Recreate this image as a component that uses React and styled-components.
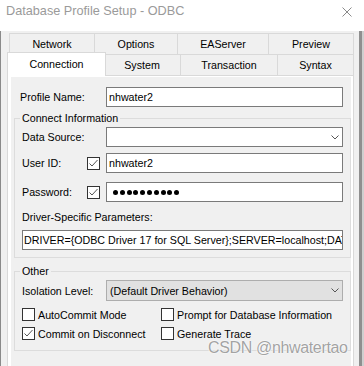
import React from "react";
import styled, { createGlobalStyle } from "styled-components";

const GlobalStyle = createGlobalStyle`
  html, body { margin: 0; padding: 0; background: #cfcfcf; }
  body { font-family: "Liberation Sans", Arial, sans-serif; }
  * { box-sizing: border-box; }
`;

const Screen = styled.div`
  position: relative;
  width: 364px;
  height: 366px;
  overflow: hidden;
  background: #cfcfcf;
  display: flex;
  flex-direction: column;
  font-family: "Liberation Sans", Arial, sans-serif;
  font-size: 10.7px;
  color: #000;
`;

const TitleBar = styled.div`
  flex: none;
  height: 31px;
  background: #fff;
  display: flex;
  align-items: flex-start;
  justify-content: space-between;
  padding: 0 12px 0 6px;
`;

const Title = styled.div`
  font-size: 12.7px;
  line-height: 22px;
  color: #9a9a9a;
`;

const CloseIcon = styled.svg`
  flex: none;
  margin-top: 7px;
`;

const Frame = styled.div`
  flex: 1;
  width: 362px;
  background: #f0f0f0;
  border-left: 1px solid #8a8a8a;
  border-right: 3px solid #8f8f8f;
  padding: 2px 0 0 6px;
  min-height: 0;
`;

const TabControl = styled.div`
  width: 347px;
  display: flex;
  flex-direction: column;
`;

const TabRow = styled.div`
  position: relative;
  z-index: 1;
  display: flex;
  align-items: flex-start;
  height: 21px;
  margin-left: 2px;
`;

const Tab = styled.div`
  flex: none;
  width: ${(p) => p.$w}px;
  height: 21px;
  margin-left: -1px;
  display: flex;
  align-items: center;
  justify-content: center;
  border: 1px solid #d9d9d9;
  border-bottom: none;
  background: #f0f0f0;
  &:first-child {
    margin-left: 0;
  }
  ${(p) =>
    p.$active &&
    `
    width: ${p.$w + 4}px;
    height: 24px;
    margin: -2px -2px 0 -2px;
    background: #fff;
    z-index: 2;
    padding-bottom: 1px;
    &:first-child { margin-left: -2px; }
  `}
`;

const Panel = styled.div`
  border: 1px solid #d9d9d9;
  background: #fff;
  padding: 1px 2px 0 3px;
  height: 320px;
`;

const Page = styled.div`
  height: 100%;
  background: #f0f0f0;
  padding: 0 0 0 3px;
  display: flex;
  flex-direction: column;
`;

const ProfileRow = styled.div`
  display: flex;
  align-items: center;
  margin-top: 10px;
  padding-left: 6px;
`;

const Label = styled.div`
  flex: none;
  width: ${(p) => p.$w}px;
  line-height: 14px;
  white-space: nowrap;
`;

const Field = styled.div`
  flex: none;
  width: ${(p) => p.$w}px;
  height: ${(p) => p.$h || 20}px;
  border: 1px solid #7a7a7a;
  background: #fff;
  padding: 0 3px 0 ${(p) => (p.$pad !== undefined ? p.$pad : 2)}px;
  display: flex;
  align-items: center;
  white-space: nowrap;
  overflow: hidden;
`;

const Combo = styled.div`
  flex: none;
  width: 237px;
  height: 21px;
  border: 1px solid #adadad;
  background: #e1e1e1;
  padding: 0 3px 0 3px;
  display: flex;
  align-items: center;
  white-space: nowrap;
`;

const Chevron = styled.svg`
  flex: none;
  margin-left: auto;
  margin-right: 0px;
`;

const Group = styled.div`
  width: 337px;
  margin-top: ${(p) => p.$mt}px;
  border: 1px solid #dcdcdc;
  padding: 0 7px ${(p) => p.$pb}px 7px;
  display: flex;
  flex-direction: column;
`;

const Caption = styled.div`
  align-self: flex-start;
  margin: -8px 0 0 -2px;
  padding: 0 2px;
  line-height: 14px;
  background: #f0f0f0;
`;

const Row = styled.div`
  display: flex;
  align-items: center;
  margin-top: ${(p) => p.$mt}px;
`;

const Box = styled.span`
  flex: none;
  width: 13px;
  height: 13px;
  border: 1px solid #333;
  background: #fff;
  margin-right: ${(p) => p.$mr}px;
  display: flex;
`;

const Dots = styled.div`
  display: flex;
  gap: 1.8px;
  margin-left: 4px;
`;

const Dot = styled.span`
  width: 5px;
  height: 5px;
  border-radius: 50%;
  background: #000;
`;

const LabelLine = styled.div`
  margin-top: ${(p) => p.$mt}px;
  line-height: 14px;
`;

const CheckGrid = styled.div`
  display: grid;
  grid-template-columns: 139px 1fr;
  row-gap: 6px;
  margin-top: 7px;
`;

const CheckItem = styled.div`
  display: flex;
  align-items: center;
  height: 13px;
  white-space: nowrap;
  line-height: 14px;
`;

const Watermark = styled.div`
  position: absolute;
  left: 208px;
  top: 339px;
  font-family: "Liberation Sans", Arial, sans-serif;
  font-size: 16px;
  line-height: 18px;
  letter-spacing: -0.35px;
  color: #a3a3a3;
  text-shadow: 0 0 1px #fff, 0 0 1px #fff, 0 0 2px #fff;
  white-space: nowrap;
`;

const Check = () => (
  <svg width="11" height="11" viewBox="0 0 11 11">
    <polyline points="1.5,5.5 4,8 9.5,2" fill="none" stroke="#555" strokeWidth="1" />
  </svg>
);

const Checkbox = ({ checked, mr }) => <Box $mr={mr}>{checked && <Check />}</Box>;

const ChevronDown = () => (
  <Chevron width="8" height="5" viewBox="0 0 8 5">
    <polyline points="0.5,0.5 4,4 7.5,0.5" fill="none" stroke="#555" strokeWidth="1" />
  </Chevron>
);

const row1 = [
  { t: "Network", w: 86 },
  { t: "Options", w: 84 },
  { t: "EAServer", w: 92 },
  { t: "Preview", w: 86 },
];
const row2 = [
  { t: "Connection", w: 95, active: true },
  { t: "System", w: 78 },
  { t: "Transaction", w: 98 },
  { t: "Syntax", w: 77 },
];

export default function App() {
  return (
    <>
      <GlobalStyle />
      <Screen>
        <TitleBar>
          <Title>Database Profile Setup - ODBC</Title>
          <CloseIcon width="10" height="10" viewBox="0 0 10 10">
            <path d="M0.5 0.5 L9.5 9.5 M9.5 0.5 L0.5 9.5" stroke="#8a8a8a" strokeWidth="1" fill="none" />
          </CloseIcon>
        </TitleBar>
        <Frame>
          <TabControl>
            <TabRow>
              {row1.map((t) => (
                <Tab key={t.t} $w={t.w}>{t.t}</Tab>
              ))}
            </TabRow>
            <TabRow>
              {row2.map((t) => (
                <Tab key={t.t} $w={t.w} $active={t.active}>{t.t}</Tab>
              ))}
            </TabRow>
            <Panel>
              <Page>
                <ProfileRow>
                  <Label $w={86}>Profile Name:</Label>
                  <Field $w={237}>nhwater2</Field>
                </ProfileRow>

                <Group $mt={11} $pb={7}>
                  <Caption>Connect Information</Caption>
                  <Row $mt={2}>
                    <Label $w={84}>Data Source:</Label>
                    <Field $w={237}>
                      <ChevronDown />
                    </Field>
                  </Row>
                  <Row $mt={6}>
                    <Label $w={65}>User ID:</Label>
                    <Checkbox checked mr={6} />
                    <Field $w={237}>nhwater2</Field>
                  </Row>
                  <Row $mt={9}>
                    <Label $w={65}>Password:</Label>
                    <Checkbox checked mr={6} />
                    <Field $w={237}>
                      <Dots>
                        {Array.from({ length: 10 }).map((_, i) => (
                          <Dot key={i} />
                        ))}
                      </Dots>
                    </Field>
                  </Row>
                  <LabelLine $mt={8}>Driver-Specific Parameters:</LabelLine>
                  <Row $mt={6}>
                    <Field $w={321} $pad={1}>
                      DRIVER={"{"}ODBC Driver 17 for SQL Server{"}"};SERVER=localhost;DATABASE=nhwater2
                    </Field>
                  </Row>
                </Group>

                <Group $mt={13} $pb={10}>
                  <Caption>Other</Caption>
                  <Row $mt={2}>
                    <Label $w={84}>Isolation Level:</Label>
                    <Combo>
                      (Default Driver Behavior)
                      <ChevronDown />
                    </Combo>
                  </Row>
                  <CheckGrid>
                    <CheckItem>
                      <Checkbox mr={3} />
                      AutoCommit Mode
                    </CheckItem>
                    <CheckItem>
                      <Checkbox mr={3} />
                      Prompt for Database Information
                    </CheckItem>
                    <CheckItem>
                      <Checkbox checked mr={3} />
                      Commit on Disconnect
                    </CheckItem>
                    <CheckItem>
                      <Checkbox mr={3} />
                      Generate Trace
                    </CheckItem>
                  </CheckGrid>
                </Group>
              </Page>
            </Panel>
          </TabControl>
        </Frame>
        <Watermark>CSDN @nhwatertao</Watermark>
      </Screen>
    </>
  );
}
